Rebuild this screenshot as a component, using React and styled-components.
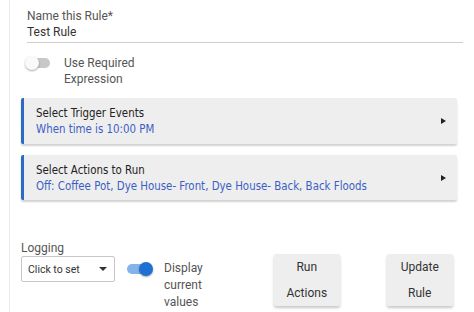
import React from "react";
import styled, { createGlobalStyle } from "styled-components";

const Global = createGlobalStyle`
  html, body { margin: 0; padding: 0; background: #fff; }
  body { width: 474px; height: 312px; overflow: hidden; }
`;

const Page = styled.div`
  width: 474px;
  height: 312px;
  box-sizing: border-box;
  margin-left: 9px;
  border-left: 1px solid #ececec;
  padding: 8px 0 0 11px;
  font-family: Roboto, "Liberation Sans", sans-serif;
  color: #444;
`;

const Field = styled.div`
  margin-left: 6px;
  width: 436px;
`;

const Label = styled.div`
  font-size: 12px;
  line-height: 16px;
  color: #555;
`;

const Input = styled.div`
  font-size: 12px;
  line-height: 16px;
  color: #333;
  height: 18px;
  border-bottom: 1px solid #cfcfcf;
`;

const ToggleRow = styled.div`
  display: flex;
  align-items: flex-start;
  gap: 14px;
  margin: ${(p) => p.$m || "0"};
`;

const Track = styled.div`
  position: relative;
  width: 23px;
  height: 10px;
  border-radius: 5px;
  margin-top: ${(p) => p.$top || "4px"};
  background: ${(p) => (p.$on ? "#84b3ea" : "#c8c8c8")};
  flex-shrink: 0;
`;

const Knob = styled.div`
  position: absolute;
  top: -2px;
  left: ${(p) => (p.$on ? "12px" : "-2px")};
  width: 14px;
  height: 14px;
  border-radius: 50%;
  background: ${(p) => (p.$on ? "#1f70d2" : "#fafafa")};
  box-shadow: 0 1px 2px rgba(0, 0, 0, 0.35);
`;

const ToggleText = styled.div`
  font-size: 12px;
  line-height: ${(p) => p.$lh || "16px"};
  margin-top: ${(p) => p.$mt || "0"};
  color: #555;
`;

const Panel = styled.div`
  display: flex;
  align-items: center;
  width: 436px;
  height: ${(p) => p.$h || "46px"};
  box-sizing: border-box;
  margin-top: ${(p) => p.$mt};
  background: #eeeeee;
  border-left: 3px solid #2a6cc4;
  border-radius: 2px;
  box-shadow: 0 2px 2px rgba(0, 0, 0, 0.18);
  padding: 0 11px 0 12px;
  font-family: Tahoma, "DejaVu Sans Condensed", "Liberation Sans", sans-serif;
`;

const PanelBody = styled.div`
  flex: 1;
`;

const PanelTitle = styled.div`
  font-size: 11.4px;
  line-height: 16px;
  color: #222;
`;

const PanelValue = styled.div`
  font-size: 11.4px;
  line-height: 16px;
  color: #3c5ec4;
`;

const Arrow = styled.div`
  width: 0;
  height: 0;
  border-top: 3.5px solid transparent;
  border-bottom: 3.5px solid transparent;
  border-left: 5px solid #222;
`;

const Bottom = styled.div`
  display: flex;
  align-items: flex-start;
  margin-top: 40px;
`;

const LogCol = styled.div`
  display: flex;
  flex-direction: column;
  width: 94px;
`;

const Select = styled.div`
  display: flex;
  align-items: center;
  justify-content: space-between;
  height: 26px;
  box-sizing: border-box;
  border: 1px solid #c8c8c8;
  border-radius: 2px;
  padding: 0 7px 0 6px;
  font-size: 10.5px;
  color: #333;
`;

const Caret = styled.div`
  width: 0;
  height: 0;
  border-left: 4px solid transparent;
  border-right: 4px solid transparent;
  border-top: 4px solid #333;
`;

const Button = styled.div`
  display: flex;
  flex-direction: column;
  align-items: center;
  justify-content: center;
  width: 66px;
  height: 52px;
  box-sizing: border-box;
  margin: 14px 0 0 ${(p) => p.$ml};
  background: #eeeeee;
  border-radius: 2px;
  box-shadow: 0 2px 3px rgba(0, 0, 0, 0.22);
  font-size: 12px;
  line-height: 26px;
  color: #333;
  text-align: center;
`;

export default function App() {
  return (
    <>
      <Global />
      <Page>
        <Field>
          <Label>Name this Rule*</Label>
          <Input>Test Rule</Input>
        </Field>
        <ToggleRow $m="10px 0 0 6px">
          <Track $top="5px">
            <Knob />
          </Track>
          <ToggleText $mt="2px">
            Use Required
            <br />
            Expression
          </ToggleText>
        </ToggleRow>
        <Panel $mt="11px" $h="46px">
          <PanelBody>
            <PanelTitle>Select Trigger Events</PanelTitle>
            <PanelValue>When time is 10:00 PM</PanelValue>
          </PanelBody>
          <Arrow />
        </Panel>
        <Panel $mt="11px" $h="45px">
          <PanelBody>
            <PanelTitle>Select Actions to Run</PanelTitle>
            <PanelValue>Off: Coffee Pot, Dye House- Front, Dye House- Back, Back Floods</PanelValue>
          </PanelBody>
          <Arrow />
        </Panel>
        <Bottom>
          <LogCol>
            <Label>Logging</Label>
            <Select>
              Click to set
              <Caret />
            </Select>
          </LogCol>
          <ToggleRow $m="23px 0 0 12px">
            <Track $on $top="1px">
              <Knob $on />
            </Track>
            <ToggleText $lh="17px" $mt="-3px">
              Display
              <br />
              current
              <br />
              values
            </ToggleText>
          </ToggleRow>
          <Button $ml="71px">
            <span>Run</span>
            <span>Actions</span>
          </Button>
          <Button $ml="47px">
            <span>Update</span>
            <span>Rule</span>
          </Button>
        </Bottom>
      </Page>
    </>
  );
}
